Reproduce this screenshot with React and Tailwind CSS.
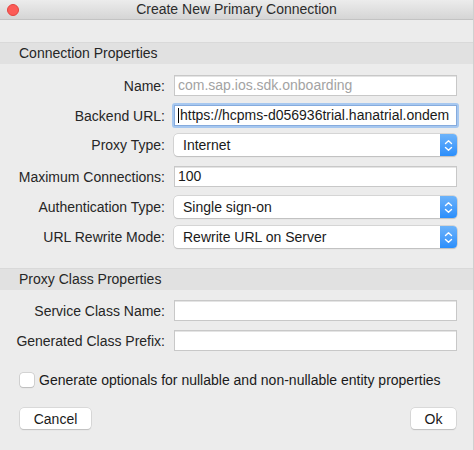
import React from 'react';

const font = { fontFamily: '"Liberation Sans", Arial, sans-serif' };

const Label = ({ children }) => (
    <div className="w-[165px] shrink-0 text-right text-[14px] text-[#262626] leading-none">{children}</div>
);

const TextField = ({ value, placeholder, focused }) => (
    <div
        className={
            focused
                ? 'ml-[7px] w-[287px] h-[25px] rounded-[3px] bg-[#a7c8f0] p-[2px]'
                : 'ml-[9px] w-[283px] h-[21px] bg-white border border-[#c8c8c8] shadow-[inset_0_1px_0_#e4e4e4]'
        }
    >
        <div className={focused ? 'h-full bg-white border border-[#86abdd] flex items-center px-[3px] overflow-hidden' : 'h-full flex items-center px-[3px] overflow-hidden'}>
            {focused && <span className="w-px h-[15px] bg-black mr-[1px] shrink-0" />}
            <span className={value ? 'text-[14px] text-[#1a1a1a] whitespace-nowrap' : 'text-[14px] text-[#a3a3a3] whitespace-nowrap'}>
                {value || placeholder}
            </span>
        </div>
    </div>
);

const Select = ({ value }) => (
    <div className="ml-[9px] w-[283px] h-[22px] flex rounded-[4px] bg-white shadow-[0_0_0_0.5px_#bdbdbd,0_1px_1px_#c4c4c4]">
        <div className="flex-1 flex items-center pl-[9px] text-[14px] text-[#1a1a1a]">{value}</div>
        <div className="w-[17px] h-full rounded-r-[4px] bg-gradient-to-b from-[#6cb3fa] to-[#2a8efb] flex items-center justify-center">
            <svg width="9" height="13" viewBox="0 0 9 13" fill="none" stroke="white" strokeWidth="1.4" strokeLinecap="round" strokeLinejoin="round">
                <path d="M1.5 4.5 L4.5 1.8 L7.5 4.5" />
                <path d="M1.5 8.5 L4.5 11.2 L7.5 8.5" />
            </svg>
        </div>
    </div>
);

const Row = ({ label, children, className }) => (
    <div className={'flex items-center ' + (className || '')}>
        <Label>{label}</Label>
        {children}
    </div>
);

const SectionHeader = ({ title }) => (
    <div className="h-[22px] bg-[#e1e1e1] border-t border-[#d9d9d9] flex items-center pl-[19px] text-[14px] text-[#262626]">
        {title}
    </div>
);

const Button = ({ children, className }) => (
    <button className={'h-[21px] rounded-[4px] bg-white text-[14px] text-[#1a1a1a] leading-none shadow-[0_0_0_0.5px_#c6c6c6,0_1px_1px_#bcbcbc] ' + className}>
        {children}
    </button>
);

export default function App() {
    return (
        <div className="w-[474px] h-[450px] bg-[#ececec] flex flex-col border-r border-[#d0d0d0]" style={font}>
            <div className="h-[20px] shrink-0 relative flex items-center justify-center bg-gradient-to-b from-[#ececec] to-[#d5d5d5] border-b border-[#c3c3c3]">
                <span className="absolute left-[7px] top-[4px] w-[12px] h-[12px] rounded-full bg-[#fc5b57] border border-[#e3443f]" />
                <span className="text-[14px] text-[#2c2c2c]">Create New Primary Connection</span>
            </div>

            <div className="mt-[22px]">
                <SectionHeader title="Connection Properties" />
            </div>

            <div className="flex flex-col">
                <Row label="Name:" className="mt-[11px]">
                    <TextField placeholder="com.sap.ios.sdk.onboarding" />
                </Row>
                <Row label="Backend URL:" className="mt-[7px]">
                    <TextField value="https://hcpms-d056936trial.hanatrial.ondem" focused />
                </Row>
                <Row label="Proxy Type:" className="mt-[6px]">
                    <Select value="Internet" />
                </Row>
                <Row label="Maximum Connections:" className="mt-[10px]">
                    <TextField value="100" />
                </Row>
                <Row label="Authentication Type:" className="mt-[9px]">
                    <Select value="Single sign-on" />
                </Row>
                <Row label="URL Rewrite Mode:" className="mt-[8px]">
                    <Select value="Rewrite URL on Server" />
                </Row>
            </div>

            <div className="mt-[20px]">
                <SectionHeader title="Proxy Class Properties" />
            </div>

            <div className="flex flex-col">
                <Row label="Service Class Name:" className="mt-[10px]">
                    <TextField />
                </Row>
                <Row label="Generated Class Prefix:" className="mt-[9px]">
                    <TextField />
                </Row>
            </div>

            <div className="mt-[22px] ml-[20px] h-[14px] flex items-center">
                <span className="w-[14px] h-[14px] shrink-0 rounded-[3px] bg-white shadow-[0_0_0_0.5px_#b9b9b9,0_1px_1px_#c4c4c4]" />
                <span className="ml-[5px] text-[14px] text-[#1a1a1a] whitespace-nowrap">Generate optionals for nullable and non-nullable entity properties</span>
            </div>

            <div className="mt-[21px] ml-[20px] mr-[17px] flex justify-between">
                <Button className="w-[71px]">Cancel</Button>
                <Button className="w-[45px]">Ok</Button>
            </div>
        </div>
    );
}
